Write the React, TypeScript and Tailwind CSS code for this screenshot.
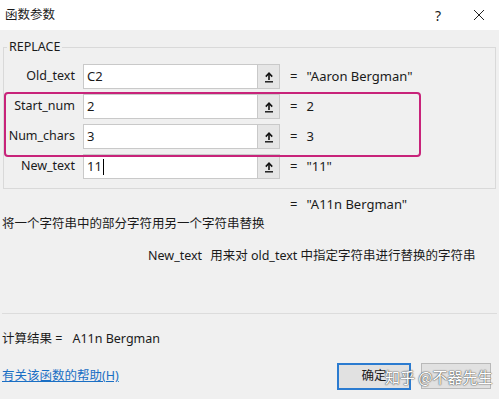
const font = "font-['Segoe_UI','Noto_Sans','Noto_Sans_CJK_SC',sans-serif]";

const argRows = [
  { label: "Old_text", value: "C2", result: "\"Aaron Bergman\"" },
  { label: "Start_num", value: "2", result: "2" },
  { label: "Num_chars", value: "3", result: "3" },
  { label: "New_text", value: "11", result: "\"11\"", caret: true },
];

function RefIcon(): React.JSX.Element {
  return (
    <svg width="10" height="12" viewBox="0 0 10 12" fill="none">
      <path d="M5 2.5V9" stroke="#111" strokeWidth="1.6" />
      <path d="M1.8 5.6L5 2.2L8.2 5.6" stroke="#111" strokeWidth="1.6" />
      <path d="M1 10.8H9" stroke="#111" strokeWidth="1.4" />
    </svg>
  );
}

export default function App(): React.JSX.Element {
  return (
    <div className={`relative h-[399px] w-[499px] overflow-hidden bg-[#f0f0f0] text-[13px] text-[#1a1a1a] ${font}`}>
      <div className="flex h-[30px] items-center bg-white pl-[5px] pr-[14px]">
        <span className="text-[12.5px]">函数参数</span>
        <span className="ml-auto mr-[32px] text-[14px]">?</span>
        <svg width="12" height="12" viewBox="0 0 12 12">
          <path d="M1 1L11 11M11 1L1 11" stroke="#222" strokeWidth="1" />
        </svg>
      </div>

      <fieldset className="relative mx-[3px] mt-[10px] h-[149px] border border-[#d9d9d9] px-0 pb-0 pt-[10px]">
        <legend className="ml-[3px] px-[2px] text-[12.5px] leading-[14px]">REPLACE</legend>
        <div className="flex flex-col gap-[5px]">
          {argRows.map((row) => (
            <div key={row.label} className="flex h-[25px] items-center">
              <span className="w-[72px] pr-[1px] text-right text-[12.5px]">{row.label}</span>
              <div className="ml-[7px] flex h-[25px] w-[175px] items-center border border-[#c9c9c9] bg-white pl-[3px]">
                {row.value}
                {row.caret && <span className="ml-px inline-block h-[16px] w-px bg-black" />}
              </div>
              <div className="flex h-[25px] w-[22px] items-center justify-center border border-l-0 border-[#c9c9c9] bg-[#e6e6e6]">
                <RefIcon />
              </div>
              <span className="ml-[10px]">=</span>
              <span className="ml-[9px]">{row.result}</span>
            </div>
          ))}
        </div>
        <div className="pointer-events-none absolute left-0 top-[38px] h-[65px] w-[417px] rounded-[4px] border-2 border-[#c8237a]" />
      </fieldset>

      <div className="mt-[6px] pl-[290px]">
        =<span className="ml-[9px]">"A11n Bergman"</span>
      </div>
      <div className="mt-0 pl-[2px] text-[12.5px]">将一个字符串中的部分字符用另一个字符串替换</div>
      <div className="mt-[14px] pl-[148px] text-[12.5px]">
        New_text<span className="ml-[8px]">用来对 old_text 中指定字符串进行替换的字符串</span>
      </div>

      <div className="mx-[2px] mt-[47px] border-t border-[#dcdcdc]" />
      <div className="mt-[16px] pl-[2px] text-[12.5px]">
        计算结果 =<span className="ml-[10px]">A11n Bergman</span>
      </div>

      <div className="mt-[14px] flex items-center pl-[2px] pr-[8px]">
        <a className="text-[12.5px] text-[#1a6fc4] underline">有关该函数的帮助(H)</a>
        <button className="ml-auto flex h-[27px] w-[74px] items-center justify-center border-2 border-[#2b7bd0] bg-[#e1e1e1] text-[12.5px]">
          确定
        </button>
        <button className="ml-[10px] flex h-[26px] w-[70px] items-center justify-center border border-[#b9b9b9] bg-[#e1e1e1] text-[12.5px] text-[#e1e1e1]">
          取消
        </button>
      </div>

      <div className="pointer-events-none absolute left-[385px] top-[366px] whitespace-nowrap font-['Noto_Sans_CJK_SC',sans-serif] text-[15px] text-white [text-shadow:0_0_1px_#555,0_0_1px_#555,0_0_2px_#888]">
        知乎 @不器先生
      </div>
    </div>
  );
}
